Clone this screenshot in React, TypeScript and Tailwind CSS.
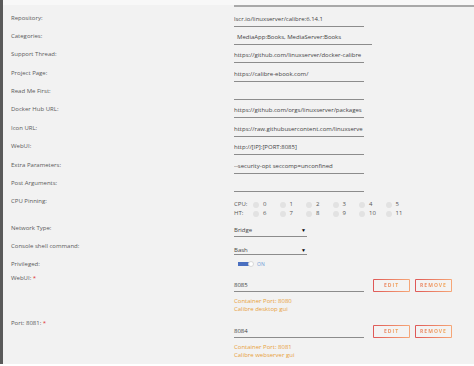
import React from "react";

const fields: [string, string, boolean?][] = [
  ["Repository:", "lscr.io/linuxserver/calibre:6.14.1"],
  ["Categories:", "MediaApp:Books, MediaServer:Books", true],
  ["Support Thread:", "https://github.com/linuxserver/docker-calibre"],
  ["Project Page:", "https://calibre-ebook.com/"],
  ["Read Me First:", ""],
  ["Docker Hub URL:", "https://github.com/orgs/linuxserver/packages"],
  ["Icon URL:", "https://raw.githubusercontent.com/linuxserve"],
  ["WebUI:", "http://[IP]:[PORT:8085]"],
  ["Extra Parameters:", "--security-opt seccomp=unconfined"],
  ["Post Arguments:", ""],
];

const cpu = ["0", "1", "2", "3", "4", "5"];
const ht = ["6", "7", "8", "9", "10", "11"];

function Label({ children, pt = "pt-[4px]" }: { children: React.ReactNode; pt?: string }) {
  return <div className={`w-[223px] shrink-0 leading-[9px] text-[#5a5a5a] ${pt}`}>{children}</div>;
}

function PinRow({ name, nums }: { name: string; nums: string[] }) {
  return (
    <div className="flex items-center h-[9px] leading-[9px]">
      <div className="w-[17px] text-[#555]">{name}</div>
      {nums.map((n) => (
        <div key={n} className="w-[26.5px] flex items-center">
          <span className="ml-[2px] w-[6px] h-[6px] rounded-full bg-[#e2e2e2]" />
          <span className="ml-[4px] text-[#555]">{n}</span>
        </div>
      ))}
    </div>
  );
}

function GradButton({ text }: { text: string }) {
  return (
    <div className="w-[37px] h-[13px] p-px rounded-[1px] bg-gradient-to-r from-[#de5757] to-[#f6a777]">
      <div className="w-full h-full bg-[#f3f3f3] flex items-center justify-center">
        <span className="text-[5px] font-bold tracking-[1px] bg-gradient-to-r from-[#e98060] to-[#f2a652] bg-clip-text text-transparent">
          {text}
        </span>
      </div>
    </div>
  );
}

function PortBlock({ label, value, port, desc, pt, mt }: { label: string; value: string; port: string; desc: string; pt: string; mt: string }) {
  return (
    <div className="flex h-[45px]">
      <Label pt={pt}>
        {label} <span className="text-[#e03030]">*</span>
      </Label>
      <div className={mt}>
        <div className="flex items-end">
          <div className="w-[130px] h-[14px] pt-[3px] leading-[9px] border-b border-[#8c8c8c] text-[#444]">{value}</div>
          <div className="ml-[9px] mb-[0.5px] flex gap-[5px]">
            <GradButton text="EDIT" />
            <GradButton text="REMOVE" />
          </div>
        </div>
        <div className="mt-[4.5px] leading-[8px] text-[#e8a13c]">
          <div>Container Port: {port}</div>
          <div>{desc}</div>
        </div>
      </div>
    </div>
  );
}

export default function App() {
  return (
    <div className="w-[474px] h-[366px] bg-white overflow-hidden font-['Open_Sans',sans-serif] text-[6px]">
      <div className="h-[364px] border-l-[3px] border-[#5a5a5a] bg-[#f2f2f2] flex flex-col">
        <div className="h-[5px] bg-[#f8f8f8]" />
        <div className="ml-[231px] h-[2px] bg-[#a9a9a9]" />
        <div className="pl-[8px] pt-[2.5px]">
          {fields.map(([label, value, wide]) => (
            <div key={label} className="flex h-[18.4px]">
              <Label>{label}</Label>
              <div
                className={`h-[17px] pt-[5px] leading-[9px] border-b border-[#8c8c8c] text-[#444] whitespace-nowrap overflow-hidden ${
                  wide ? "w-[138px] pl-[3px]" : "w-[130px]"
                }`}
              >
                {value}
              </div>
            </div>
          ))}

          <div className="flex h-[27px]">
            <Label>CPU Pinning:</Label>
            <div className="pt-[7px]">
              <PinRow name="CPU:" nums={cpu} />
              <PinRow name="HT:" nums={ht} />
            </div>
          </div>

          <div className="flex h-[18px]">
            <Label>Network Type:</Label>
            <div className="w-[73px] h-[17px] pt-[6px] leading-[9px] border-b border-[#8c8c8c] text-[#444] flex justify-between">
              <span>Bridge</span>
              <span className="text-[5px] text-black pr-[1px]">▼</span>
            </div>
          </div>

          <div className="flex h-[18px]">
            <Label>Console shell command:</Label>
            <div className="w-[73px] h-[17px] pt-[8px] leading-[9px] border-b border-[#8c8c8c] text-[#444] flex justify-between">
              <span>Bash</span>
              <span className="text-[5px] text-black pr-[1px]">▼</span>
            </div>
          </div>

          <div className="flex h-[14px]">
            <Label>Privileged:</Label>
            <div className="pt-[2px] pl-[4px] flex items-center h-[14px]">
              <div className="flex items-center">
                <span className="w-[11px] h-[4px] bg-[#4a6fc0]" />
                <span className="-ml-[1px] w-[6px] h-[6px] rounded-full bg-white border border-[#d8d8d8]" />
              </div>
              <span className="ml-[3px] text-[5px] text-[#6e9bd6]">ON</span>
            </div>
          </div>

          <PortBlock label="WebUI:" value="8085" port="8080" desc="Calibre desktop gui" pt="pt-[4px]" mt="mt-[8px]" />
          <PortBlock label="Port: 8081:" value="8084" port="8081" desc="Calibre webserver gui" pt="pt-[3.5px]" mt="mt-[9px]" />
        </div>
      </div>
    </div>
  );
}
